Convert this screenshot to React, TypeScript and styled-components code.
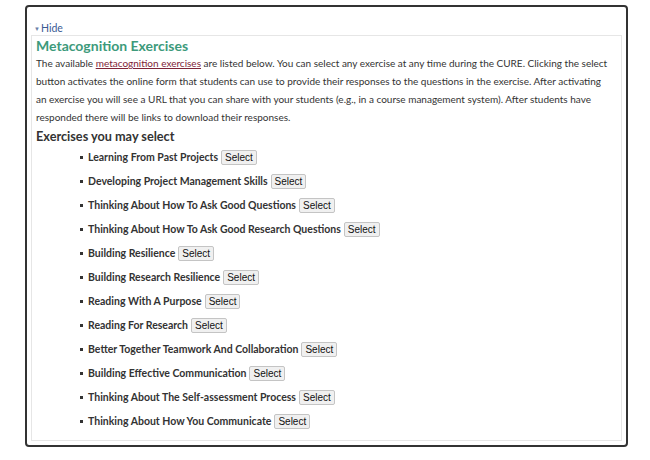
import styled, { createGlobalStyle } from "styled-components";

const GlobalStyle = createGlobalStyle`
  body {
    margin: 0;
    background: #ffffff;
    font-family: Lato, "Open Sans", sans-serif;
    color: #333333;
  }
`;

const exercises = [
  "Learning From Past Projects",
  "Developing Project Management Skills",
  "Thinking About How To Ask Good Questions",
  "Thinking About How To Ask Good Research Questions",
  "Building Resilience",
  "Building Research Resilience",
  "Reading With A Purpose",
  "Reading For Research",
  "Better Together Teamwork And Collaboration",
  "Building Effective Communication",
  "Thinking About The Self-assessment Process",
  "Thinking About How You Communicate",
];

const App = () => {
  return (
    <>
      <GlobalStyle />
      <Frame>
        <Toggle href="#">
          <Caret>▼</Caret>Hide
        </Toggle>
        <Panel>
          <Title>Metacognition Exercises</Title>
          <Intro>
            The available <IntroLink href="#">metacognition exercises</IntroLink> are listed
            below. You can select any exercise at any time during the CURE. Clicking the select
            button activates the online form that students can use to provide their responses to
            the questions in the exercise. After activating an exercise you will see a URL that
            you can share with your students (e.g., in a course management system). After
            students have responded there will be links to download their responses.
          </Intro>
          <SectionTitle>Exercises you may select</SectionTitle>
          <ExerciseList>
            {exercises.map((name) => (
              <ExerciseItem key={name}>
                <ExerciseName>{name}</ExerciseName>
                <SelectButton type="button">Select</SelectButton>
              </ExerciseItem>
            ))}
          </ExerciseList>
        </Panel>
      </Frame>
    </>
  );
};

export default App;

const Frame = styled.div`
  box-sizing: border-box;
  width: 603px;
  height: 442px;
  margin: 5px 0 0 25px;
  border: 2px solid #333333;
  border-radius: 4px;
  padding: 14px 4px 4px 4px;
  display: flex;
  flex-direction: column;
`;

const Toggle = styled.a`
  display: flex;
  align-items: center;
  height: 14px;
  padding-left: 3px;
  font-size: 10.5px;
  color: #3b5a93;
  text-decoration: none;
`;

const Caret = styled.span`
  font-size: 6px;
  margin-right: 1px;
  color: #6a7fa8;
`;

const Panel = styled.div`
  flex: 1;
  border: 1px solid #e6e6e6;
  padding: 2px 0 0 4px;
`;

const Title = styled.h2`
  margin: 0;
  font-size: 14px;
  line-height: 16px;
  font-weight: 700;
  color: #3d9a7b;
`;

const Intro = styled.p`
  margin: 0;
  padding-right: 10px;
  font-size: 10px;
  line-height: 18px;
  color: #333333;
`;

const IntroLink = styled.a`
  color: #7e2438;
  text-decoration: underline;
`;

const SectionTitle = styled.h3`
  margin: 1px 0 0 0;
  font-size: 12.7px;
  line-height: 18px;
  font-weight: 700;
  color: #333333;
`;

const ExerciseList = styled.ul`
  list-style: none;
  margin: 0;
  padding: 0 0 0 44px;
`;

const ExerciseItem = styled.li`
  display: flex;
  align-items: center;
  height: 24px;

  &::before {
    content: "";
    width: 3px;
    height: 3px;
    margin-right: 5px;
    background: #333333;
  }
`;

const ExerciseName = styled.span`
  font-size: 10.5px;
  font-weight: 700;
  color: #333333;
`;

const SelectButton = styled.button`
  margin-left: 3px;
  height: 15px;
  padding: 0 3px;
  font-family: "Liberation Sans", Arial, sans-serif;
  font-size: 10px;
  color: #111111;
  background: #f0f0f0;
  border: 1px solid #c4c4c4;
  border-radius: 2px;
`;
